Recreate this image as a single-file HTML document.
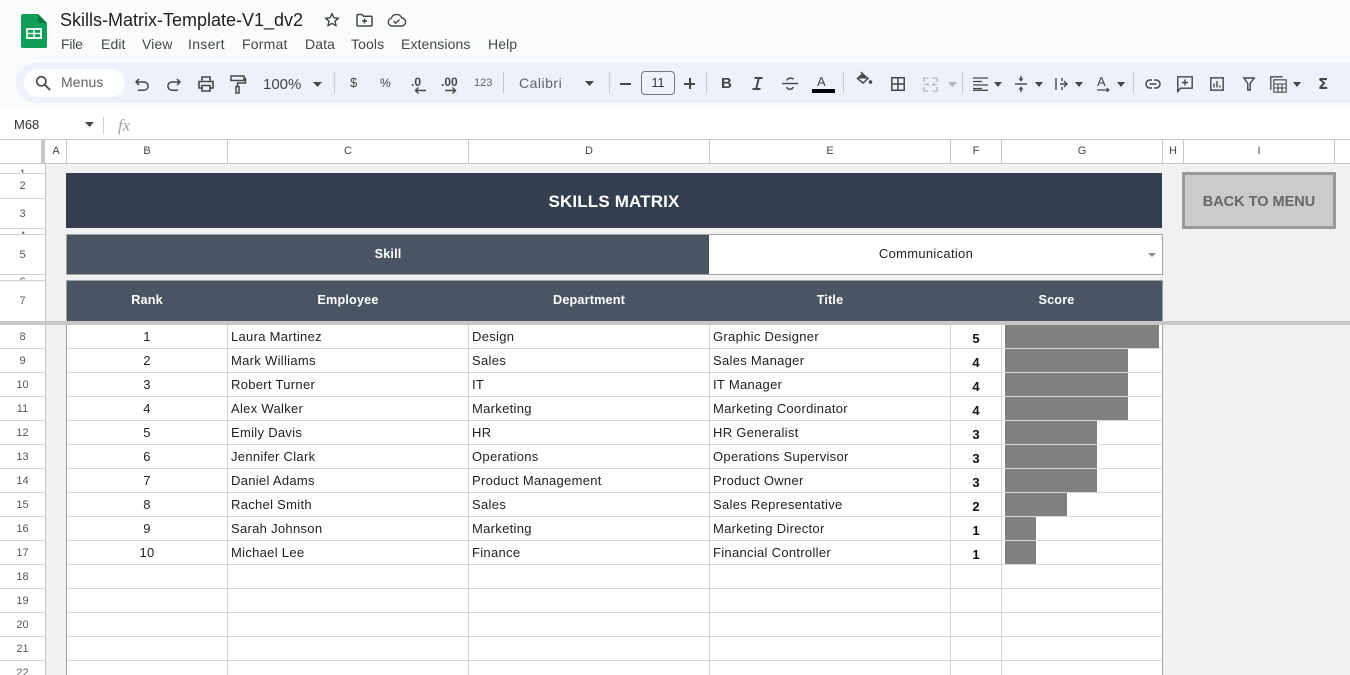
<!DOCTYPE html>
<html><head><meta charset="utf-8"><style>
html,body{margin:0;padding:0;background:#fff}
#p{position:relative;width:1350px;height:675px;overflow:hidden;background:#f1f1f1;font-family:"Liberation Sans",sans-serif;color:#222}
#p div,#p span.a{position:absolute}
.t{white-space:nowrap}
.m{top:36px;font-size:14px;line-height:17px;color:#444746;letter-spacing:.1px}
.tx{font-size:12px;line-height:14px;color:#444746;white-space:nowrap}
.ch{top:140px;height:23px;line-height:23px;font-size:11px;color:#444;text-align:center;background:#fff;border-right:1px solid #c7c7c7}
.rh{left:0;width:45px;text-align:center;font-size:11px;color:#555;line-height:14px;margin-top:1px}
.hl{left:0;width:45px;height:1px;background:#d0d0d0}
.c{font-size:13px;letter-spacing:.3px;line-height:16px;color:#222;white-space:nowrap}
.ctr{text-align:center}
.g{height:1px;left:67px;width:1095px;background:#d9d9d9}
.v{width:1px;top:325px;height:350px;background:#d4d4d4}
.b{left:1005px;height:23px;background:#808080}
.w{font-weight:bold;color:#fff;font-size:12.7px;letter-spacing:.15px;line-height:16px;text-align:center;white-space:nowrap}
.s{font-weight:bold;font-size:13px;line-height:16px;color:#111;text-align:center;left:951px;width:50px}
.sep{top:72px;width:1px;height:21px;background:#c7c7c7}
svg{position:absolute;overflow:visible}
</style></head><body><div id="p">

<!-- top chrome -->
<div style="left:0;top:0;width:1350px;height:108px;background:#f9fbfd"></div>
<div style="left:0;top:108px;width:1350px;height:32px;background:#fff"></div>
<div style="left:16px;top:63px;width:1400px;height:40px;border-radius:20px;background:#edf2fa"></div>

<!-- Sheets logo -->
<svg style="left:21px;top:14px" width="26" height="34" viewBox="0 0 26 34"><path d="M2 0H17L26 9V32a2 2 0 0 1-2 2H2a2 2 0 0 1-2-2V2a2 2 0 0 1 2-2z" fill="#0f9d58"/><path d="M17 0L26 9H19a2 2 0 0 1-2-2z" fill="#0a7a43"/><path d="M5 14H21V25H5z" fill="#e8f5ee"/><path d="M7 16H12.200V18.700H7zM13.800 16H19V18.700H13.800zM7 20.300H12.200V23H7zM13.800 20.300H19V23H13.800z" fill="#0f9d58"/></svg>

<div class="t" style="left:60px;top:9px;font-size:18px;line-height:22px;color:#1f1f1f">Skills-Matrix-Template-V1_dv2</div>
<svg style="left:324px;top:12px" width="16" height="16" viewBox="0 0 16 16"><path d="M8 1.500l1.900 4.300 4.600.4-3.500 3 1.100 4.600L8 11.400l-4.100 2.400L5 9.200l-3.500-3 4.600-.4z" fill="none" stroke="#444746" stroke-width="1.400" stroke-linejoin="round"/></svg>
<svg style="left:356px;top:13px" width="17" height="14" viewBox="0 0 17 14"><path d="M1 2.500a1 1 0 0 1 1-1h4l1.500 1.700H15a1 1 0 0 1 1 1V12a1 1 0 0 1-1 1H2a1 1 0 0 1-1-1z" fill="none" stroke="#444746" stroke-width="1.500"/><path d="M8.500 5.500v5M6 8h5" stroke="#444746" stroke-width="1.500"/></svg>
<svg style="left:387px;top:13px" width="19" height="14" viewBox="0 0 19 14"><path d="M5 13a4 4 0 0 1-.6-7.900A5.500 5.500 0 0 1 14.700 5 4 4 0 0 1 14.500 13z" fill="none" stroke="#444746" stroke-width="1.400"/><path d="M6.500 8l2.200 2.200L12.500 6.500" fill="none" stroke="#444746" stroke-width="1.400"/></svg>

<div class="m" style="left:61px;letter-spacing:-.2px">File</div>
<div class="m" style="left:101px">Edit</div>
<div class="m" style="left:142px">View</div>
<div class="m" style="left:188px;letter-spacing:.3px">Insert</div>
<div class="m" style="left:242px;letter-spacing:.2px">Format</div>
<div class="m" style="left:305px">Data</div>
<div class="m" style="left:351px">Tools</div>
<div class="m" style="left:401px">Extensions</div>
<div class="m" style="left:488px">Help</div>

<!-- toolbar -->
<div style="left:24px;top:69px;width:101px;height:28px;border-radius:14px;background:#fff"></div>
<svg style="left:35px;top:75px" width="16" height="16" viewBox="0 0 16 16"><circle cx="6.300" cy="6.300" r="4.600" fill="none" stroke="#444746" stroke-width="1.600"/><path d="M9.800 9.800L15 15" stroke="#444746" stroke-width="1.800"/></svg>
<div class="t" style="left:61px;top:74px;font-size:14px;letter-spacing:.1px;line-height:17px;color:#5f6368">Menus</div>

<svg style="left:135px;top:78px" width="14" height="14" viewBox="0 0 14 14"><path d="M4 1L1 4l3 3M1.500 4H9a4 4 0 0 1 0 8.200H3" fill="none" stroke="#444746" stroke-width="1.500"/></svg>
<svg style="left:167px;top:78px" width="14" height="14" viewBox="0 0 14 14"><path d="M10 1l3 3-3 3M12.500 4H5a4 4 0 0 0 0 8.200h6" fill="none" stroke="#444746" stroke-width="1.500"/></svg>
<svg style="left:198px;top:76px" width="16" height="16" viewBox="0 0 16 16"><path d="M4 4.500V1h8v3.500M4 12H1V5.500h14V12h-3M4 9.500h8V15H4z" fill="none" stroke="#444746" stroke-width="1.600"/></svg>
<svg style="left:230px;top:75px" width="16" height="19" viewBox="0 0 16 19"><path d="M1 1h13v4.500H1zM14 3.500h1.500V8H7.500v3.500M6 11.500h3V18H6z" fill="none" stroke="#444746" stroke-width="1.500"/></svg>
<div class="t" style="left:263px;top:76px;font-size:15px;line-height:17px;color:#444746">100%</div>
<svg style="left:313px;top:82px" width="9" height="5"><path d="M0 0h9L4.500 5z" fill="#444746"/></svg>
<div class="sep" style="left:334px"></div>
<div class="tx" style="left:350px;top:76px;font-size:13px">$</div>
<div class="tx" style="left:380px;top:76px">%</div>
<div class="tx" style="left:411px;top:75px;font-weight:bold">.0</div>
<svg style="left:414px;top:87px" width="12" height="7"><path d="M12 3.500H2M4.500 .5L1.500 3.500l3 3" fill="none" stroke="#444746" stroke-width="1.400"/></svg>
<div class="tx" style="left:441px;top:75px;font-weight:bold">.00</div>
<svg style="left:445px;top:87px" width="12" height="7"><path d="M0 3.500h10M7.500 .5l3 3-3 3" fill="none" stroke="#444746" stroke-width="1.400"/></svg>
<div class="t" style="left:474px;top:77px;font-size:11px;line-height:13px;color:#5f6368">123</div>
<div class="sep" style="left:503px"></div>
<div class="t" style="left:519px;top:75px;font-size:14px;letter-spacing:.5px;line-height:17px;color:#5f6368">Calibri</div>
<svg style="left:585px;top:81px" width="9" height="5"><path d="M0 0h9L4.500 5z" fill="#444746"/></svg>
<div class="sep" style="left:609px"></div>
<div style="left:620px;top:83px;width:11px;height:2px;background:#444746"></div>
<div style="left:641px;top:71px;width:32px;height:22px;border:1px solid #747775;border-radius:4px;text-align:center;line-height:22px;font-size:12.500px;color:#333">11</div>
<div style="left:684px;top:83px;width:11px;height:2px;background:#444746"></div>
<div style="left:689px;top:78px;width:2px;height:11px;background:#444746"></div>
<div class="sep" style="left:706px"></div>
<div class="t" style="left:721px;top:75px;font-size:15px;line-height:18px;font-weight:bold;color:#444746">B</div>
<svg style="left:752px;top:77px" width="11" height="13" viewBox="0 0 11 13"><path d="M2.500 1h8M.5 12h8M6.800 1L4.200 12" fill="none" stroke="#444746" stroke-width="1.900"/></svg>
<svg style="left:782px;top:76px" width="16" height="16" viewBox="0 0 16 16"><path d="M0 7.500h16" stroke="#444746" stroke-width="1.400"/><path d="M11.500 3.200C10.500 2 5.500 1.500 5 4.500M4.800 11c.6 3 5.800 3 6.200 0" fill="none" stroke="#444746" stroke-width="1.500"/></svg>
<div class="t" style="left:817px;top:74px;font-size:13px;line-height:15px;color:#444746">A</div>
<div style="left:812px;top:89px;width:23px;height:4px;background:#000"></div>
<div class="sep" style="left:843px"></div>
<svg style="left:856px;top:72px" width="17" height="15" viewBox="0 0 17 15"><path d="M6.500 2L12 6.500 7 11 1.500 6.500z" fill="none" stroke="#444746" stroke-width="1.500"/><path d="M6.500 3L11 6.500H2z" fill="#444746"/><path d="M5 0l2 2" stroke="#444746" stroke-width="1.500"/><circle cx="14.500" cy="10" r="1.800" fill="#444746"/></svg>
<svg style="left:891px;top:77px" width="14" height="14" viewBox="0 0 14 14"><path d="M.8.800h12.400v12.400H.800zM7 .8v12.400M.8 7h12.400" fill="none" stroke="#444746" stroke-width="1.500"/></svg>
<svg style="left:923px;top:77px" width="15" height="15" viewBox="0 0 15 15"><path d="M5.500 1H1v4M5.500 14H1v-4M9.500 1H14v4M9.500 14H14v-4M1 7.500h4M5 6v3M10 7.500h4M10 6v3" fill="none" stroke="#b4b8bc" stroke-width="1.300"/></svg>
<svg style="left:948px;top:82px" width="9" height="5"><path d="M0 0h9L4.500 5z" fill="#b4b8bc"/></svg>
<div class="sep" style="left:962px"></div>
<svg style="left:973px;top:77px" width="15" height="14" viewBox="0 0 15 14"><path d="M0 1h15M0 4.500h9M0 8h15M0 11.500h9M0 13.300h15" stroke="#444746" stroke-width="1.300"/></svg>
<svg style="left:994px;top:82px" width="8" height="5"><path d="M0 0h8L4 5z" fill="#444746"/></svg>
<svg style="left:1015px;top:75px" width="12" height="18" viewBox="0 0 12 18"><path d="M0 9h12" stroke="#444746" stroke-width="1.400"/><path d="M6 1v5M6 12v5" stroke="#444746" stroke-width="1.400"/><path d="M3.500 3.500h5L6 6.500zM3.500 14.500h5L6 11.500z" fill="#444746"/></svg>
<svg style="left:1035px;top:82px" width="8" height="5"><path d="M0 0h8L4 5z" fill="#444746"/></svg>
<svg style="left:1055px;top:77px" width="13" height="14" viewBox="0 0 13 14"><path d="M1 1v12M5 7h7M9 4l3 3-3 3M7 1v3M7 10v3" fill="none" stroke="#444746" stroke-width="1.400"/></svg>
<svg style="left:1075px;top:82px" width="8" height="5"><path d="M0 0h8L4 5z" fill="#444746"/></svg>
<div class="t" style="left:1097px;top:75px;font-size:13px;line-height:14px;color:#444746">A</div>
<svg style="left:1097px;top:88px" width="13" height="5"><path d="M0 2h11M9.500 .2l2.500 1.800-2.500 1.800" fill="none" stroke="#444746" stroke-width="1.200"/></svg>
<svg style="left:1117px;top:82px" width="8" height="5"><path d="M0 0h8L4 5z" fill="#444746"/></svg>
<div class="sep" style="left:1133px"></div>
<svg style="left:1145px;top:79px" width="16" height="10" viewBox="0 0 16 10"><path d="M7 1H5a4 4 0 0 0 0 8h2M9 1h2a4 4 0 0 1 0 8H9M4.500 5h7" fill="none" stroke="#444746" stroke-width="1.500"/></svg>
<svg style="left:1177px;top:76px" width="16" height="17" viewBox="0 0 16 17"><path d="M.8 .8h14.400v11.400H3.500L.8 15.500z" fill="none" stroke="#444746" stroke-width="1.400"/><path d="M8 3.500v6M5 6.500h6" stroke="#444746" stroke-width="1.400"/></svg>
<svg style="left:1210px;top:77px" width="14" height="14" viewBox="0 0 14 14"><path d="M.8.800h12.400v12.400H.800z" fill="none" stroke="#444746" stroke-width="1.400"/><path d="M4 6.500v4M7 4v6.500M10 8.500v2" stroke="#444746" stroke-width="1.400"/></svg>
<svg style="left:1243px;top:77px" width="12" height="14" viewBox="0 0 12 14"><path d="M.8 1h10.400L7.200 6.500V13H4.800V6.500z" fill="none" stroke="#444746" stroke-width="1.400"/></svg>
<svg style="left:1270px;top:76px" width="17" height="17" viewBox="0 0 17 17"><path d="M3.500 .8H.8v13M.8 .8h12" fill="none" stroke="#444746" stroke-width="1.300"/><path d="M3.800 3.800h12.400v12.400H3.800zM3.800 8h12.400M3.800 12h12.400M8 8v8M12 8v8" fill="none" stroke="#444746" stroke-width="1.100"/></svg>
<svg style="left:1293px;top:82px" width="8" height="5"><path d="M0 0h8L4 5z" fill="#444746"/></svg>
<div class="t" style="left:1318px;top:75px;font-size:15px;line-height:18px;font-weight:bold;color:#444746;font-family:'DejaVu Sans',sans-serif">Σ</div>

<!-- formula bar -->
<div class="t" style="left:14px;top:117px;font-size:13px;line-height:15px;color:#333">M68</div>
<svg style="left:85px;top:122px" width="9" height="5"><path d="M0 0h9L4.500 5z" fill="#444746"/></svg>
<div style="left:103px;top:117px;width:1px;height:17px;background:#d0d0d0"></div>
<div class="t" style="left:118px;top:116px;font-family:'Liberation Serif',serif;font-style:italic;font-size:17px;line-height:19px;color:#a0a0a0">fx</div>

<!-- col headers -->
<div style="left:0;top:139px;width:1350px;height:1px;background:#c7c7c7"></div>
<div style="left:0;top:140px;width:1350px;height:24px;background:#fff"></div>
<div style="left:0;top:163px;width:1350px;height:1px;background:#c7c7c7"></div>
<div style="left:41px;top:140px;width:4px;height:23px;background:#c7c7c7"></div>
<div class="ch" style="left:46px;width:20px">A</div>
<div class="ch" style="left:67px;width:160px">B</div>
<div class="ch" style="left:228px;width:240px">C</div>
<div class="ch" style="left:469px;width:240px">D</div>
<div class="ch" style="left:710px;width:240px">E</div>
<div class="ch" style="left:951px;width:50px">F</div>
<div class="ch" style="left:1002px;width:160px">G</div>
<div class="ch" style="left:1163px;width:20px">H</div>
<div class="ch" style="left:1184px;width:150px">I</div>

<!-- row header column -->
<div style="left:0;top:164px;width:45px;height:511px;background:#fff"></div>
<div style="left:45px;top:164px;width:1px;height:511px;background:#c7c7c7"></div>

<div class="rh" style="top:166px;height:6px;overflow:hidden">1</div>
<div class="hl" style="top:173px"></div>
<div class="rh" style="top:178px">2</div>
<div class="hl" style="top:198px"></div>
<div class="rh" style="top:206px">3</div>
<div class="hl" style="top:228px"></div>
<div class="rh" style="top:228px;height:5px;overflow:hidden">4</div>
<div class="hl" style="top:234px"></div>
<div class="rh" style="top:247px">5</div>
<div class="hl" style="top:274px"></div>
<div class="rh" style="top:274px;height:5px;overflow:hidden">6</div>
<div class="hl" style="top:280px"></div>
<div class="rh" style="top:293px">7</div>
<div class="rh" style="top:329px">8</div><div class="hl" style="top:348px"></div>
<div class="rh" style="top:353px">9</div><div class="hl" style="top:372px"></div>
<div class="rh" style="top:377px">10</div><div class="hl" style="top:396px"></div>
<div class="rh" style="top:401px">11</div><div class="hl" style="top:420px"></div>
<div class="rh" style="top:425px">12</div><div class="hl" style="top:444px"></div>
<div class="rh" style="top:449px">13</div><div class="hl" style="top:468px"></div>
<div class="rh" style="top:473px">14</div><div class="hl" style="top:492px"></div>
<div class="rh" style="top:497px">15</div><div class="hl" style="top:516px"></div>
<div class="rh" style="top:521px">16</div><div class="hl" style="top:540px"></div>
<div class="rh" style="top:545px">17</div><div class="hl" style="top:564px"></div>
<div class="rh" style="top:569px">18</div><div class="hl" style="top:588px"></div>
<div class="rh" style="top:593px">19</div><div class="hl" style="top:612px"></div>
<div class="rh" style="top:617px">20</div><div class="hl" style="top:636px"></div>
<div class="rh" style="top:641px">21</div><div class="hl" style="top:660px"></div>
<div class="rh" style="top:665px">22</div>

<!-- title band -->
<div style="left:66px;top:173px;width:1096px;height:55px;background:#333f4f"></div>
<div class="t" style="left:66px;width:1096px;top:192px;text-align:center;font-weight:bold;font-size:17px;letter-spacing:.15px;line-height:20px;color:#fff">SKILLS MATRIX</div>

<!-- back button -->
<div style="left:1182px;top:172px;width:148px;height:51px;background:#cbcbcb;border:3px solid #999;text-align:center;line-height:54px;font-weight:bold;font-size:14.500px;color:#666;border-radius:1px;white-space:nowrap">BACK TO MENU</div>

<!-- skill row -->
<div style="left:66px;top:234px;width:1095px;height:39px;border:1px solid #a3a3a3;background:#fff"></div>
<div style="left:67px;top:235px;width:642px;height:39px;background:#4a5564"></div>
<div class="w" style="left:67px;width:642px;top:246px">Skill</div>
<div class="c ctr" style="left:710px;width:432px;top:246px">Communication</div>
<svg style="left:1148px;top:253px" width="8" height="4"><path d="M0 0h8L4 4z" fill="#8a8a8a"/></svg>

<!-- header row -->
<div style="left:66px;top:280px;width:1097px;height:41px;background:#a3a3a3"></div>
<div style="left:67px;top:281px;width:1095px;height:40px;background:#4a5564"></div>
<div class="w" style="left:67px;width:160px;top:292px">Rank</div>
<div class="w" style="left:228px;width:240px;top:292px">Employee</div>
<div class="w" style="left:469px;width:240px;top:292px">Department</div>
<div class="w" style="left:710px;width:240px;top:292px">Title</div>
<div class="w" style="left:951px;width:211px;top:292px">Score</div>

<!-- freeze line -->
<div style="left:0;top:321px;width:1350px;height:4px;background:#c7c7c7"></div>

<!-- grid -->
<div style="left:67px;top:325px;width:1095px;height:350px;background:#fff"></div>
<div style="left:66px;top:325px;width:1px;height:350px;background:#a3a3a3"></div>
<div style="left:1162px;top:325px;width:1px;height:350px;background:#a3a3a3"></div>
<div class="g" style="top:348px"></div><div class="g" style="top:372px"></div><div class="g" style="top:396px"></div><div class="g" style="top:420px"></div><div class="g" style="top:444px"></div><div class="g" style="top:468px"></div><div class="g" style="top:492px"></div><div class="g" style="top:516px"></div><div class="g" style="top:540px"></div><div class="g" style="top:564px"></div><div class="g" style="top:588px"></div><div class="g" style="top:612px"></div><div class="g" style="top:636px"></div><div class="g" style="top:660px"></div>
<div class="v" style="left:227px"></div><div class="v" style="left:468px"></div><div class="v" style="left:709px"></div><div class="v" style="left:950px"></div><div class="v" style="left:1001px"></div>

<!-- bars -->
<div class="b" style="top:325px;width:154px"></div>
<div class="b" style="top:349px;width:123px"></div>
<div class="b" style="top:373px;width:123px"></div>
<div class="b" style="top:397px;width:123px"></div>
<div class="b" style="top:421px;width:92px"></div>
<div class="b" style="top:445px;width:92px"></div>
<div class="b" style="top:469px;width:92px"></div>
<div class="b" style="top:493px;width:62px"></div>
<div class="b" style="top:517px;width:31px"></div>
<div class="b" style="top:541px;width:31px"></div>

<!-- data -->
<div class="c ctr" style="left:67px;width:160px;top:329px">1</div><div class="c" style="left:231px;top:329px">Laura Martinez</div><div class="c" style="left:472px;top:329px">Design</div><div class="c" style="left:713px;top:329px">Graphic Designer</div><div class="s" style="top:331px">5</div>
<div class="c ctr" style="left:67px;width:160px;top:353px">2</div><div class="c" style="left:231px;top:353px">Mark Williams</div><div class="c" style="left:472px;top:353px">Sales</div><div class="c" style="left:713px;top:353px">Sales Manager</div><div class="s" style="top:355px">4</div>
<div class="c ctr" style="left:67px;width:160px;top:377px">3</div><div class="c" style="left:231px;top:377px">Robert Turner</div><div class="c" style="left:472px;top:377px">IT</div><div class="c" style="left:713px;top:377px">IT Manager</div><div class="s" style="top:379px">4</div>
<div class="c ctr" style="left:67px;width:160px;top:401px">4</div><div class="c" style="left:231px;top:401px">Alex Walker</div><div class="c" style="left:472px;top:401px">Marketing</div><div class="c" style="left:713px;top:401px">Marketing Coordinator</div><div class="s" style="top:403px">4</div>
<div class="c ctr" style="left:67px;width:160px;top:425px">5</div><div class="c" style="left:231px;top:425px">Emily Davis</div><div class="c" style="left:472px;top:425px">HR</div><div class="c" style="left:713px;top:425px">HR Generalist</div><div class="s" style="top:427px">3</div>
<div class="c ctr" style="left:67px;width:160px;top:449px">6</div><div class="c" style="left:231px;top:449px">Jennifer Clark</div><div class="c" style="left:472px;top:449px">Operations</div><div class="c" style="left:713px;top:449px">Operations Supervisor</div><div class="s" style="top:451px">3</div>
<div class="c ctr" style="left:67px;width:160px;top:473px">7</div><div class="c" style="left:231px;top:473px">Daniel Adams</div><div class="c" style="left:472px;top:473px">Product Management</div><div class="c" style="left:713px;top:473px">Product Owner</div><div class="s" style="top:475px">3</div>
<div class="c ctr" style="left:67px;width:160px;top:497px">8</div><div class="c" style="left:231px;top:497px">Rachel Smith</div><div class="c" style="left:472px;top:497px">Sales</div><div class="c" style="left:713px;top:497px">Sales Representative</div><div class="s" style="top:499px">2</div>
<div class="c ctr" style="left:67px;width:160px;top:521px">9</div><div class="c" style="left:231px;top:521px">Sarah Johnson</div><div class="c" style="left:472px;top:521px">Marketing</div><div class="c" style="left:713px;top:521px">Marketing Director</div><div class="s" style="top:523px">1</div>
<div class="c ctr" style="left:67px;width:160px;top:545px">10</div><div class="c" style="left:231px;top:545px">Michael Lee</div><div class="c" style="left:472px;top:545px">Finance</div><div class="c" style="left:713px;top:545px">Financial Controller</div><div class="s" style="top:547px">1</div>

</div></body></html>
